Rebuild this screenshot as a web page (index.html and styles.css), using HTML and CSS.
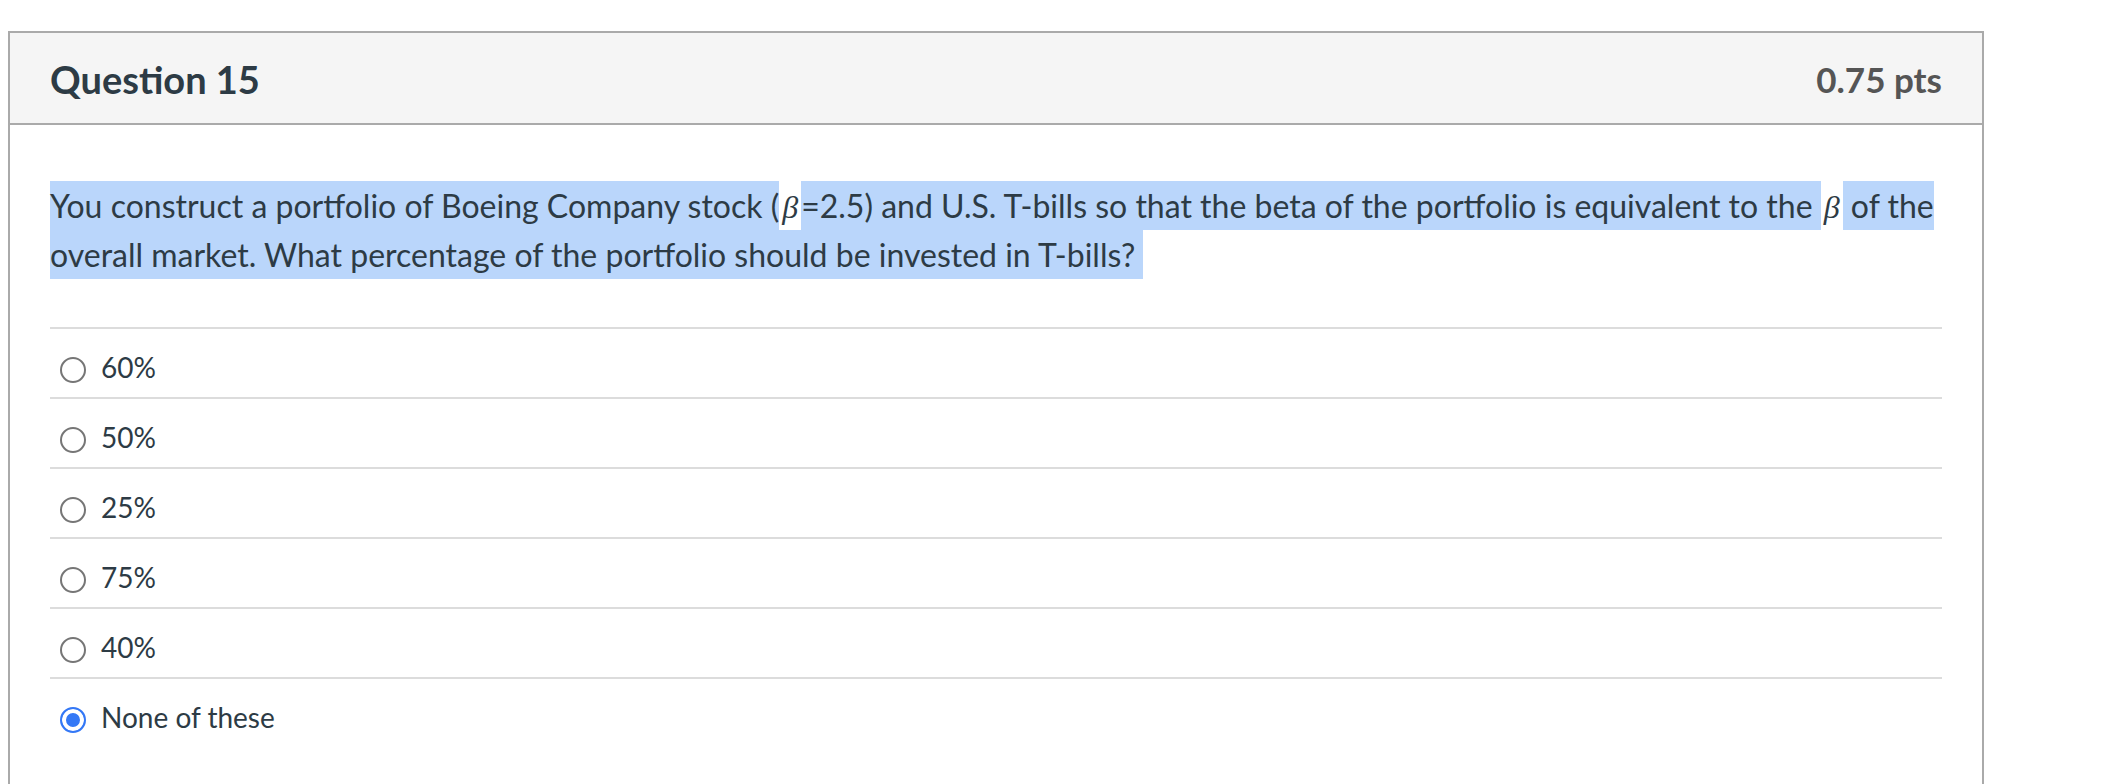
FILE: index.html
```html
<!DOCTYPE html>
<html lang="en">
<head>
	<meta charset="UTF-8">
	<meta name="viewport" content="width=device-width,initial-scale=1.0">
	<title>Question 15</title>
	<link rel="stylesheet" href="styles.css">
</head>
<body>
	<div class="page">
		<div class="question">
			<div class="question-header">
				<h2 class="question-title">Question 15</h2>
				<span class="question-points">0.75 pts</span>
			</div>
			<div class="question-body">
				<!-- 题干（选中状态） -->
				<p class="question-text"><span class="sel">You construct a portfolio of Boeing Company stock (</span><span class="beta">β</span><span class="sel">=2.5) and U.S. T-bills so that the beta of the portfolio is equivalent to the </span><span class="beta">β</span><span class="sel"> of the overall market. What percentage of the portfolio should be invested in T-bills?&nbsp;</span></p>
				<!-- 选项 -->
				<div class="answers">
					<label class="answer"><input type="radio" name="q15"><span>60%</span></label>
					<label class="answer"><input type="radio" name="q15"><span>50%</span></label>
					<label class="answer"><input type="radio" name="q15"><span>25%</span></label>
					<label class="answer"><input type="radio" name="q15"><span>75%</span></label>
					<label class="answer"><input type="radio" name="q15"><span>40%</span></label>
					<label class="answer"><input type="radio" name="q15" checked><span>None of these</span></label>
				</div>
			</div>
		</div>
	</div>
</body>
</html>
```

FILE: styles.css
```css
body{
	margin: 0;
	background-color: #fff;
	color: #2d3b45;
	font-family: Lato, "Open Sans", sans-serif;
}
.page{
	padding: 31px 8px 0;
}
.question{
	width: 1976px;
	height: 800px;
	box-sizing: border-box;
	border: 2px solid #aaa;
	border-bottom: 0;
}
.question-header{
	display: flex;
	align-items: center;
	justify-content: space-between;
	height: 92px;
	box-sizing: border-box;
	padding: 1px 40px 0;
	background-color: #f5f5f5;
	border-bottom: 2px solid #aaa;
}
.question-title{
	margin: 0;
	font-size: 38px;
	font-weight: 700;
	color: #2d3b45;
}
.question-points{
	font-size: 35px;
	font-weight: 700;
	color: #555;
}
.question-body{
	padding: 57px 40px 0;
}
.question-text{
	margin: 0 0 48px;
	font-size: 32px;
	line-height: 48px;
}
.question-text .sel{
	background-color: #bad6fb;
	padding: 5px 0;
}
.question-text .beta{
	font-family: "Liberation Serif", "DejaVu Serif", serif;
	font-style: italic;
	padding: 0 3px;
}
.answer{
	display: flex;
	align-items: center;
	height: 70px;
	box-sizing: border-box;
	padding-top: 7px;
	border-top: 2px solid #dcdcdc;
	font-size: 28px;
	cursor: pointer;
}
.answer input{
	appearance: none;
	-webkit-appearance: none;
	width: 26px;
	height: 26px;
	margin: 7px 15px 0 10px;
	border: 2px solid #767676;
	border-radius: 50%;
	background-color: #fff;
}
.answer input:checked{
	border-color: #3478f6;
	background-color: #3478f6;
	box-shadow: inset 0 0 0 4px #fff;
}
```
